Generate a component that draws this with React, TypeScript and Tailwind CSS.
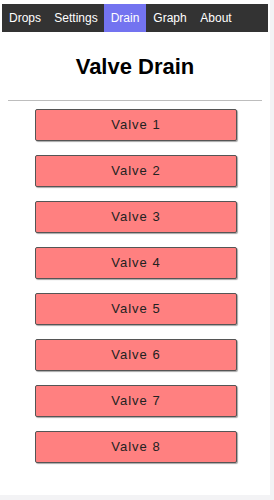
const TABS = [
  { label: "Drops", w: "w-[46px]" },
  { label: "Settings", w: "w-[56px]" },
  { label: "Drain", w: "w-[42px]" },
  { label: "Graph", w: "w-[48px]" },
  { label: "About", w: "w-[44px]" },
];
const VALVES = [1, 2, 3, 4, 5, 6, 7, 8];

export default function App() {
  return (
    <div className="w-[274px] h-[500px] bg-[#f3f3f5]" style={{ fontFamily: "'Liberation Sans', Arial, sans-serif" }}>
      <div className="w-[270px] h-[495px] bg-white pt-[4px] px-[2px]">
        {/* nav */}
        <div className="flex h-[28px] bg-[#333333] text-white text-[12px]">
          {TABS.map((t) => (
            <div
              key={t.label}
              className={`flex items-center justify-center ${t.w} ${t.label === "Drain" ? "bg-[#7373f0]" : ""}`}
            >
              {t.label}
            </div>
          ))}
        </div>

        <h1 className="text-center text-[22px] font-bold text-black mt-[22px] leading-[26px]">Valve Drain</h1>

        <hr className="mx-[6px] mt-[20px] border-t border-[#bdbdbd]" />

        <div className="flex flex-col items-center gap-[14px] mt-[8px] pl-[2px]">
          {VALVES.map((v) => (
            <button
              key={v}
              className="w-[202px] h-[32px] bg-[#ff8080] border border-[#555] rounded-[2px] shadow-[1px_1px_1px_rgba(0,0,0,0.35)] text-[13px] tracking-[1px] text-[#222]"
            >
              Valve {v}
            </button>
          ))}
        </div>
      </div>
    </div>
  );
}
